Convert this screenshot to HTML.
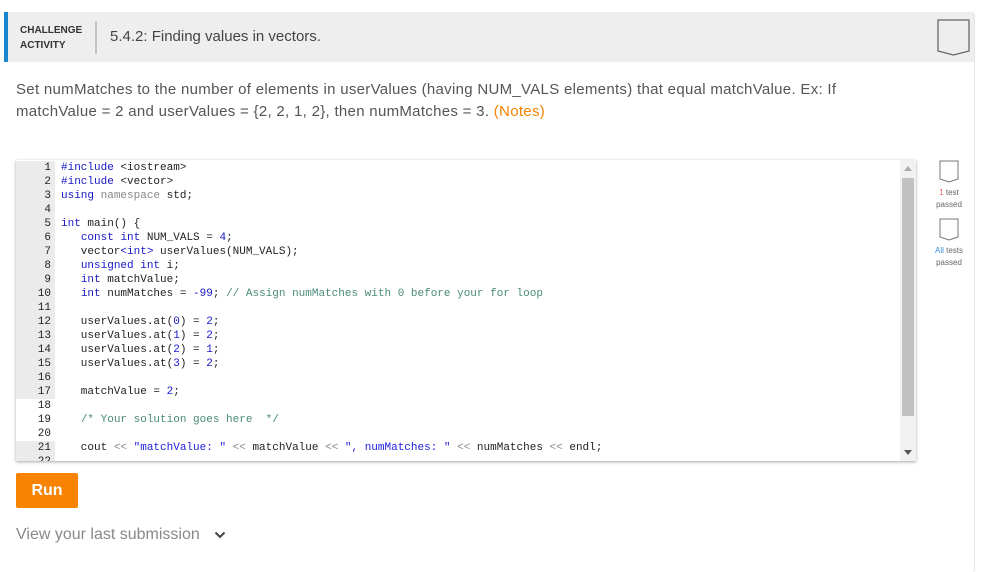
<!DOCTYPE html>
<html><head><style>
body{margin:0;width:995px;height:560px;background:#fff;font-family:"Liberation Sans",sans-serif;position:relative;overflow:hidden}
.card{position:absolute;left:4px;top:12px;width:970px;height:560px;border-right:1px solid #e4e4e4;border-radius:3px}
.hdr{position:absolute;left:0;top:0;width:970px;height:50px;background:#eeeeee;border-left:4px solid #1a86d0;box-sizing:border-box}
.ca{position:absolute;left:12px;top:11px;font-size:10px;font-weight:bold;color:#333;line-height:15px}
.sep{position:absolute;left:87px;top:9px;width:2px;height:33px;background:#c4c4c4}
.ttl{position:absolute;left:102px;top:16px;font-size:15px;color:#444}
.desc{position:absolute;left:16px;top:79px;font-size:15px;letter-spacing:0.3px;color:#555;line-height:22px;width:850px}
.ed{position:absolute;left:16px;top:160px;width:900px;height:301px;background:#fff;box-shadow:0 1px 3px rgba(0,0,0,.35);overflow:hidden}
.gut{position:absolute;left:0;top:1px;width:39px;height:301px}
.ln{height:14px;text-align:right;padding-right:4px;background:#ebebeb;font:11px/14px "Liberation Mono",monospace;color:#222}
.ln.w{background:#fff}
.code{position:absolute;left:45px;top:1px;font:11px/14px "Liberation Mono",monospace;color:#222;white-space:pre}
.k{color:#1717c8}.g{color:#888}.c{color:#4a8a7a}.n{color:#1717c8}.s{color:#2020e0}
.sb{position:absolute;right:0;top:0;width:16px;height:301px;background:#f1f1f1}
.th{position:absolute;left:2px;top:18px;width:12px;height:238px;background:#c1c1c1}
.run{position:absolute;left:16px;top:473px;width:62px;height:35px;background:#f78300;color:#fff;font-weight:bold;font-size:16px;text-align:center;line-height:35px;border-radius:2px}
.view{position:absolute;left:16px;top:526px;font-size:16px;color:#888}
.sm{position:absolute;font-size:8px;color:#666;text-align:center;width:40px;line-height:12px}
</style></head><body>
<div class="card">
<div class="hdr">
<div class="ca">CHALLENGE<br>ACTIVITY</div>
<div class="sep"></div>
<div class="ttl">5.4.2: Finding values in vectors.</div>
<svg style="position:absolute;left:929px;top:7px" width="34" height="38"><path d="M1 1H32V32L16.5 36L1 32Z" fill="none" stroke="#666" stroke-width="1.3"/></svg>
</div>
</div>
<div class="desc">Set numMatches to the number of elements in userValues (having NUM_VALS elements) that equal matchValue. Ex: If matchValue = 2 and userValues = {2, 2, 1, 2}, then numMatches = 3. <span style="color:#f78300">(Notes)</span></div>
<div class="ed">
<div class="gut">
<div class="ln">1</div><div class="ln">2</div><div class="ln">3</div><div class="ln">4</div><div class="ln">5</div><div class="ln">6</div><div class="ln">7</div><div class="ln">8</div><div class="ln">9</div><div class="ln">10</div><div class="ln">11</div><div class="ln">12</div><div class="ln">13</div><div class="ln">14</div><div class="ln">15</div><div class="ln">16</div><div class="ln">17</div><div class="ln w">18</div><div class="ln w">19</div><div class="ln w">20</div><div class="ln">21</div><div class="ln">22</div>
</div>
<div class="code"><span class="k">#include</span> &lt;iostream&gt;
<span class="k">#include</span> &lt;vector&gt;
<span class="k">using</span> <span class="g">namespace</span> std;

<span class="k">int</span> main() {
   <span class="k">const</span> <span class="k">int</span> NUM_VALS = <span class="n">4</span>;
   vector<span class="k">&lt;int&gt;</span> userValues(NUM_VALS);
   <span class="k">unsigned</span> <span class="k">int</span> i;
   <span class="k">int</span> matchValue;
   <span class="k">int</span> numMatches = <span class="n">-99</span>; <span class="c">// Assign numMatches with 0 before your for loop</span>

   userValues.at(<span class="n">0</span>) = <span class="n">2</span>;
   userValues.at(<span class="n">1</span>) = <span class="n">2</span>;
   userValues.at(<span class="n">2</span>) = <span class="n">1</span>;
   userValues.at(<span class="n">3</span>) = <span class="n">2</span>;

   matchValue = <span class="n">2</span>;

   <span class="c">/* Your solution goes here  */</span>

   cout <span class="g">&lt;&lt;</span> <span class="s">"matchValue: "</span> <span class="g">&lt;&lt;</span> matchValue <span class="g">&lt;&lt;</span> <span class="s">", numMatches: "</span> <span class="g">&lt;&lt;</span> numMatches <span class="g">&lt;&lt;</span> endl;
</div>
<div class="sb"><div class="th"></div>
<svg style="position:absolute;left:4px;top:6px" width="8" height="5"><path d="M0 5L4 0L8 5Z" fill="#aaa"/></svg>
<svg style="position:absolute;left:4px;top:290px" width="8" height="5"><path d="M0 0L8 0L4 5Z" fill="#555"/></svg>
</div>
</div>
<svg style="position:absolute;left:939px;top:160px" width="22" height="24"><path d="M1 1H19V19L10 22L1 19Z" fill="none" stroke="#777" stroke-width="1"/></svg>
<div class="sm" style="left:929px;top:187px"><span style="color:#d66">1</span> test<br>passed</div>
<svg style="position:absolute;left:939px;top:218px" width="22" height="24"><path d="M1 1H19V19L10 22L1 19Z" fill="none" stroke="#777" stroke-width="1"/></svg>
<div class="sm" style="left:929px;top:245px"><span style="color:#3a8ed8">All</span> tests<br>passed</div>
<div class="run">Run</div>
<div class="view">View your last submission <svg style="margin-left:10px;vertical-align:middle" width="12" height="8"><path d="M1.5 1.5L6 6L10.5 1.5" fill="none" stroke="#444" stroke-width="2"/></svg></div>
</body></html>
